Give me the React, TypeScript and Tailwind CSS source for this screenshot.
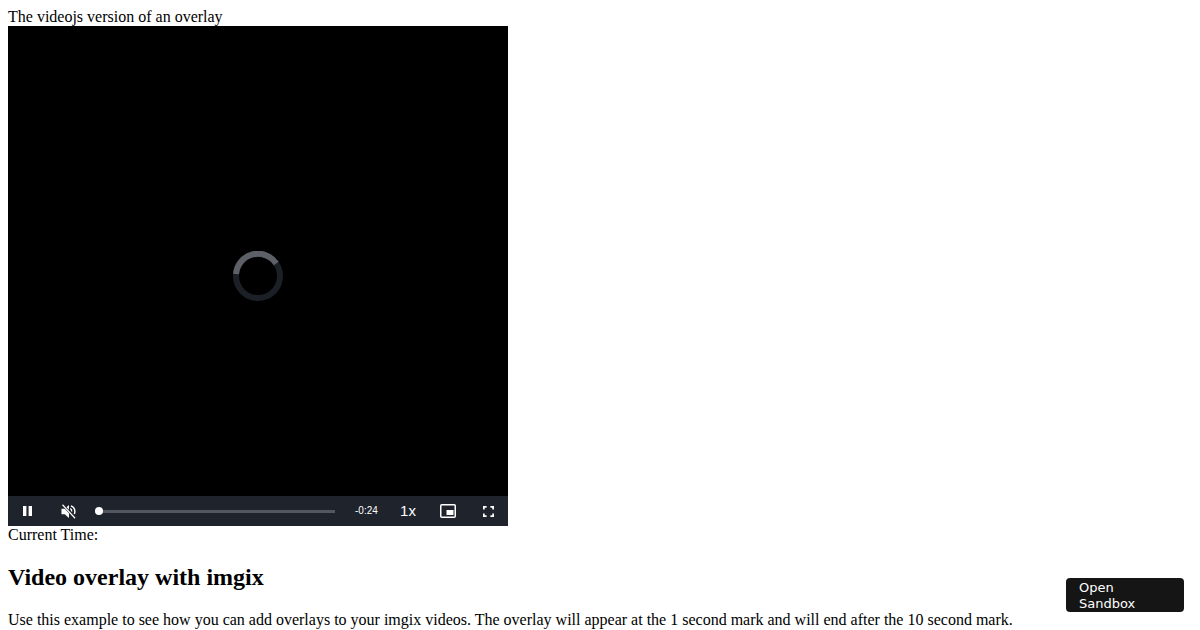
export default function App() {
  return (
    <div className="relative h-[630px] overflow-hidden bg-white p-2 font-['Liberation_Serif',serif] text-base leading-[18px] text-black">
      <div>The videojs version of an overlay</div>
      <div className="flex h-[500px] w-[500px] flex-col bg-black">
        <div className="flex flex-1 items-center justify-center pt-[30px]">
          <svg width="50" height="50" viewBox="0 0 50 50" fill="none">
            <circle cx="25" cy="25" r="22" stroke="#1b1f26" strokeWidth="6" />
            <path d="M3 23A22 22 0 0 1 43.2 12.5" stroke="#5d6167" strokeWidth="6" />
          </svg>
        </div>
        <div className="flex h-[30px] items-center bg-[#1e232c] font-['Liberation_Sans',sans-serif] text-white">
          <div className="flex w-10 justify-center">
            <svg width="10" height="10" viewBox="0 0 10 10" fill="white">
              <rect x="0" y="0" width="3.4" height="10" />
              <rect x="5.6" y="0" width="3.4" height="10" />
            </svg>
          </div>
          <div className="flex w-10 justify-center">
            <svg width="15" height="15" viewBox="0 0 16 16" fill="white">
              <path d="M0.5 5h3.5L8.5 1v14L4 11H0.5z" />
              <path d="M10 4.8a3.8 3.8 0 0 1 1.4 3.2M10.5 2a6.4 6.4 0 0 1 4.3 6 6.4 6.4 0 0 1-.6 2.6" stroke="white" strokeWidth="1.5" fill="none" />
              <path d="M2 1L15 15" stroke="#1e232c" strokeWidth="2.6" />
              <path d="M1.6 0.8L15 15.2" stroke="white" strokeWidth="1.3" />
            </svg>
          </div>
          <div className="relative mt-px ml-[7px] h-[3px] w-[240px] bg-[#53575e]">
            <div className="absolute left-0 top-[-3px] h-2 w-2 rounded-full bg-white" />
          </div>
          <div className="ml-5 w-[23px] text-[10px] leading-none">-0:24</div>
          <div className="mb-[2px] ml-[10px] w-10 text-center text-[15px] leading-none">1x</div>
          <div className="flex w-10 justify-center">
            <svg width="16" height="14" viewBox="0 0 16 14" fill="none">
              <rect x="0.75" y="0.75" width="14.5" height="12.5" rx="1" stroke="white" strokeWidth="1.5" />
              <rect x="6.5" y="6" width="7" height="5" fill="white" />
            </svg>
          </div>
          <div className="flex w-10 justify-center">
            <svg width="11" height="11" viewBox="0 0 11 11" fill="none" stroke="white" strokeWidth="1.7">
              <path d="M0.85 3.6V0.85H3.6M7.4 0.85h2.75V3.6M10.15 7.4v2.75H7.4M3.6 10.15H0.85V7.4" />
            </svg>
          </div>
        </div>
      </div>
      <div>Current Time:</div>
      <h2 className="mt-5 mb-5 text-2xl leading-[27px] font-bold">Video overlay with imgix</h2>
      <p>Use this example to see how you can add overlays to your imgix videos. The overlay will appear at the 1 second mark and will end after the 10 second mark.</p>
      <div className="absolute left-[1066px] top-[578px] h-[34px] w-[118px] rounded-[4px] bg-[#151515] px-[13px] pt-[2px] font-['DejaVu_Sans',sans-serif] text-[13px] leading-4 text-white">
        Open Sandbox
      </div>
    </div>
  );
}
